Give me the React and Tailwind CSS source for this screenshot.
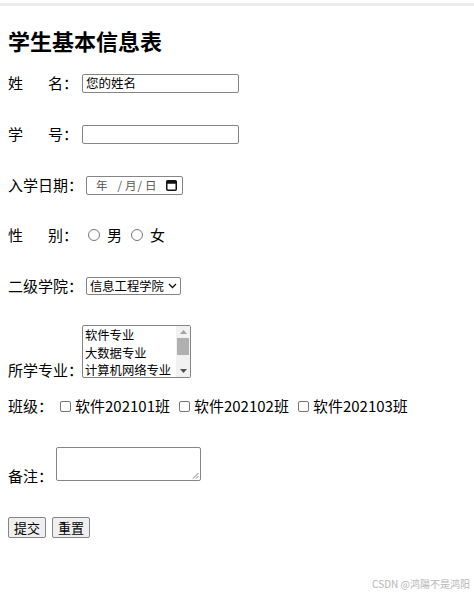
import React from 'react';

const font = { fontFamily: '"Noto Sans CJK SC", "Noto Sans", sans-serif' };

function Radio({ label }) {
  return (
    <span className="flex items-center">
      <span className="w-[12px] h-[12px] rounded-full border border-[#767676] bg-white" />
      <span className="ml-[7px]">{label}</span>
    </span>
  );
}

function Check({ label }) {
  return (
    <span className="flex items-center">
      <span className="w-[11px] h-[11px] rounded-[2px] border border-[#767676] bg-white" />
      <span className="ml-[4px]">{label}</span>
    </span>
  );
}

export default function App() {
  const majors = ['软件专业', '大数据专业', '计算机网络专业'];

  return (
    <div className="relative w-[474px] h-[594px] bg-white text-black text-[15px] leading-[20px]" style={font}>
      <div className="h-[3px]" />
      <div className="h-[3px] bg-[#ececec]" />

      <div className="pl-[8px] flex flex-col">
        {/* 标题 */}
        <h1 className="mt-[20px] text-[22px] leading-[28px] font-bold">学生基本信息表</h1>

        {/* 姓名 */}
        <div className="mt-[19px] h-[20px] flex items-center">
          <span>姓</span>
          <span className="ml-[25px]">名：</span>
          <input
            className="ml-[4px] w-[157px] h-[19px] border border-[#858585] rounded-[2px] px-[3px] text-[12.5px] outline-none"
            defaultValue="您的姓名"
          />
        </div>

        {/* 学号 */}
        <div className="mt-[31px] h-[20px] flex items-center">
          <span>学</span>
          <span className="ml-[25px]">号：</span>
          <input className="ml-[4px] w-[157px] h-[19px] border border-[#858585] rounded-[2px] px-[3px] text-[12.5px] outline-none" />
        </div>

        {/* 入学日期 */}
        <div className="mt-[31px] h-[20px] flex items-center">
          <span>入学日期：</span>
          <div className="ml-[3px] w-[97px] h-[19px] border border-[#858585] rounded-[2px] flex items-center pl-[9px] pr-[5px] text-[11.5px] text-[#555]">
            <span>年</span>
            <span className="ml-[10px]">/</span>
            <span className="ml-[3px]">月</span>
            <span className="ml-[1px]">/</span>
            <span className="ml-[3px]">日</span>
            <svg className="ml-auto" width="11" height="11" viewBox="0 0 11 11">
              <rect x="0.75" y="0.75" width="9.5" height="9.5" rx="1" fill="none" stroke="#111" strokeWidth="1.5" />
              <rect x="0.75" y="0.75" width="9.5" height="3" fill="#111" />
            </svg>
          </div>
        </div>

        {/* 性别 */}
        <div className="mt-[30px] h-[20px] flex items-center">
          <span>性</span>
          <span className="ml-[25px]">别：</span>
          <span className="ml-[10px] flex items-center gap-[9px]">
            <Radio label="男" />
            <Radio label="女" />
          </span>
        </div>

        {/* 二级学院 */}
        <div className="mt-[31px] h-[20px] flex items-center">
          <span>二级学院：</span>
          <div className="ml-[3px] w-[95px] h-[18px] border border-[#858585] rounded-[2px] flex items-center pl-[3px] pr-[3px] text-[12.3px] leading-[16px]">
            <span>信息工程学院</span>
            <svg className="ml-auto" width="9" height="6" viewBox="0 0 9 6">
              <path d="M1 1 L4.5 4.5 L8 1" fill="none" stroke="#111" strokeWidth="1.3" />
            </svg>
          </div>
        </div>

        {/* 所学专业 */}
        <div className="mt-[29px] flex items-end">
          <span className="leading-[16px]">所学专业：</span>
          <div className="ml-[-1px] w-[109px] h-[53px] border border-[#858585] rounded-[2px] flex overflow-hidden">
            <div className="flex-1 flex flex-col pl-[2px] pt-[1px] text-[12.3px] leading-[17.5px]">
              {majors.map((m) => (
                <span key={m} className="whitespace-nowrap">{m}</span>
              ))}
            </div>
            <div className="w-[14px] bg-[#f1f1f1] flex flex-col items-center">
              <svg className="mt-[4px]" width="7" height="4" viewBox="0 0 7 4">
                <path d="M0 4 L3.5 0 L7 4 Z" fill="#a3a3a3" />
              </svg>
              <div className="mt-[4px] w-[12px] h-[17px] bg-[#b0b0b0]" />
              <svg className="mt-auto mb-[4px]" width="7" height="4" viewBox="0 0 7 4">
                <path d="M0 0 L3.5 4 L7 0 Z" fill="#505050" />
              </svg>
            </div>
          </div>
        </div>

        {/* 班级 */}
        <div className="mt-[18px] h-[20px] flex items-center">
          <span>班级：</span>
          <span className="ml-[7px] flex items-center gap-[9px]">
            <Check label="软件202101班" />
            <Check label="软件202102班" />
            <Check label="软件202103班" />
          </span>
        </div>

        {/* 备注 */}
        <div className="mt-[31px] flex items-end">
          <span className="leading-[16px]">备注：</span>
          <div className="relative ml-[3px] mb-[3px] w-[145px] h-[34px] border border-[#858585] rounded-[2px]">
            <svg className="absolute right-[1px] bottom-[1px]" width="7" height="7" viewBox="0 0 7 7">
              <path d="M6.5 1 L1 6.5 M6.5 4 L4 6.5" stroke="#777" strokeWidth="1" />
            </svg>
          </div>
        </div>

        {/* 按钮 */}
        <div className="mt-[33px] flex items-center gap-[6px] text-[13px]">
          <button className="w-[38px] h-[21px] bg-[#efefef] border border-[#858585] rounded-[2px] leading-[18px]">提交</button>
          <button className="w-[38px] h-[21px] bg-[#efefef] border border-[#858585] rounded-[2px] leading-[18px]">重置</button>
        </div>
      </div>

      <div className="absolute right-[4px] bottom-[3px] text-[10px] leading-[14px] text-[#b5b5b5]">CSDN @鸿陽不是鸿阳</div>
    </div>
  );
}
